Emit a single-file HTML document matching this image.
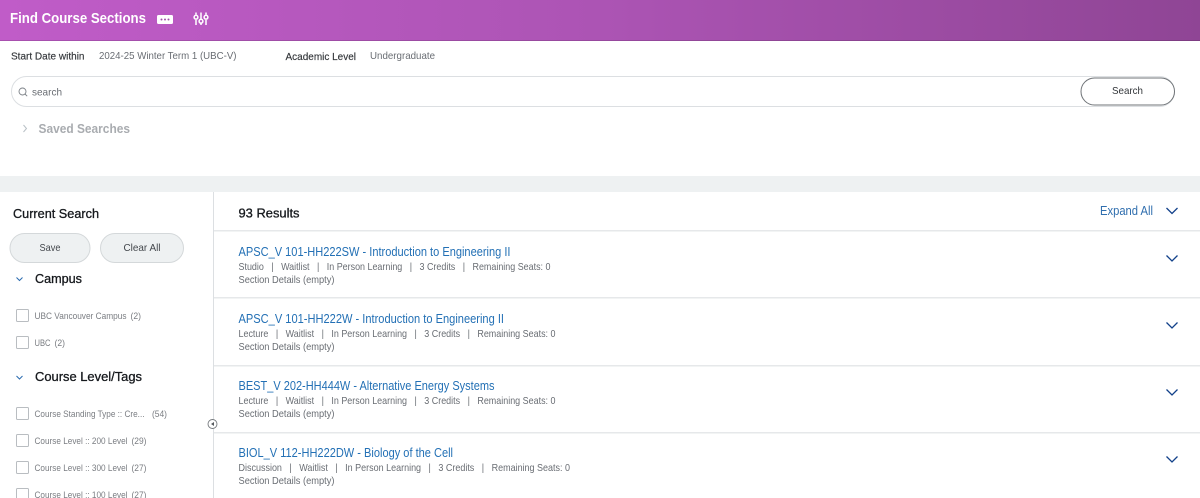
<!DOCTYPE html>
<html><head><meta charset="utf-8"><style>
html,body{margin:0;padding:0;background:#fff;width:1200px;height:498px;overflow:hidden}
svg{display:block;filter:blur(.3px)}
text{font-family:"Liberation Sans",sans-serif}
.g{fill:#696d73;font-size:10.3px}
.l{fill:#2370b5;font-size:13px}
.c{fill:#7a7d82;font-size:9.5px}
.m{fill:#15181c;stroke:#15181c;stroke-width:.3px}
</style></head><body>
<svg width="1200" height="498" viewBox="0 0 1200 498" xmlns="http://www.w3.org/2000/svg">
<defs><linearGradient id="g1" x1="0" x2="1" y1="0" y2="0"><stop offset="0" stop-color="#c05cc8"/><stop offset=".5" stop-color="#ac54b4"/><stop offset="1" stop-color="#8f4595"/></linearGradient></defs>
<rect width="1200" height="41" fill="url(#g1)"/>
<rect y="40" width="1200" height="1" fill="#000" opacity=".12"/>
<text x="10" y="23" fill="#fff" font-size="15" font-weight="bold" textLength="136" lengthAdjust="spacingAndGlyphs">Find Course Sections</text>
<rect x="157" y="15" width="16" height="9" rx="1.500" fill="#fff"/>
<circle cx="161.500" cy="19.500" r="1" fill="#a14ea8"/><circle cx="165" cy="19.500" r="1" fill="#a14ea8"/><circle cx="168.500" cy="19.500" r="1" fill="#a14ea8"/>
<g stroke="#fff" stroke-width="1.500" fill="none"><path d="M196 12.500v2M196 20v5M201 12.500v7M201 23.500v1.500M206 12.500v2M206 20v5"/><circle cx="196" cy="17.200" r="1.900"/><circle cx="201" cy="21.200" r="1.900"/><circle cx="206" cy="17.200" r="1.900"/></g>

<text x="11" y="59.500" fill="#33363a" font-size="10.500" textLength="73.500" lengthAdjust="spacingAndGlyphs" stroke="#33363a" stroke-width=".15">Start Date within</text>
<text x="99" y="59" class="g" textLength="137.500" lengthAdjust="spacingAndGlyphs" style="font-size:10.500px">2024-25 Winter Term 1 (UBC-V)</text>
<text x="285.500" y="60" fill="#33363a" font-size="10.500" textLength="70.500" lengthAdjust="spacingAndGlyphs" stroke="#33363a" stroke-width=".15">Academic Level</text>
<text x="370" y="59" class="g" textLength="65" lengthAdjust="spacingAndGlyphs" style="font-size:10.500px">Undergraduate</text>

<rect x="11.500" y="76.500" width="1163" height="30" rx="15" fill="#fff" stroke="#dcdfe2"/>
<circle cx="22.500" cy="91.500" r="3.500" fill="none" stroke="#7c8187" stroke-width=".9"/><path d="M25 94l2.200 2.200" stroke="#7c8187" stroke-width=".9"/>
<text x="32" y="95.500" class="g" textLength="30" lengthAdjust="spacingAndGlyphs">search</text>
<rect x="1081" y="78" width="93.500" height="27" rx="13.500" fill="#fff" stroke="#6f7377" stroke-width="1"/>
<text x="1112" y="94" fill="#33363a" font-size="10.500" textLength="31" lengthAdjust="spacingAndGlyphs">Search</text>

<path d="M23.500 125l3 3.500-3 3.500" fill="none" stroke="#b8c0c6" stroke-width="1"/>
<text x="38.500" y="133" fill="#a9acb0" font-size="12.800" font-weight="bold" textLength="91.500" lengthAdjust="spacingAndGlyphs">Saved Searches</text>

<rect y="176" width="1200" height="16" fill="#eef1f2"/>
<rect x="213" y="192" width="1" height="306" fill="#dcdfe2"/>

<text x="13" y="218" class="m" font-size="12.800" textLength="86" lengthAdjust="spacingAndGlyphs">Current Search</text>
<rect x="10" y="233.500" width="80" height="29" rx="14.500" fill="#eef1f2" stroke="#d4d8da"/>
<text x="39.500" y="251" fill="#43474c" font-size="10.500" textLength="21" lengthAdjust="spacingAndGlyphs">Save</text>
<rect x="100.500" y="233.500" width="83" height="29" rx="14.500" fill="#eef1f2" stroke="#d4d8da"/>
<text x="123.500" y="251" fill="#43474c" font-size="10.500" textLength="37" lengthAdjust="spacingAndGlyphs">Clear All</text>

<path d="M16.500 277.500l3 3 3-3" fill="none" stroke="#2a6bb0" stroke-width="1"/>
<text x="35" y="283" class="m" font-size="13" textLength="47" lengthAdjust="spacingAndGlyphs">Campus</text>
<rect x="16.500" y="309.500" width="12" height="12" rx="1" fill="#fff" stroke="#b9bdc1"/>
<text x="34.500" y="319" class="c" textLength="92" lengthAdjust="spacingAndGlyphs">UBC Vancouver Campus</text>
<text x="130.500" y="319" class="c" textLength="10.500" lengthAdjust="spacingAndGlyphs">(2)</text>
<rect x="16.500" y="336.500" width="12" height="12" rx="1" fill="#fff" stroke="#b9bdc1"/>
<text x="34.500" y="346" class="c" textLength="16" lengthAdjust="spacingAndGlyphs">UBC</text>
<text x="54.500" y="346" class="c" textLength="10.500" lengthAdjust="spacingAndGlyphs">(2)</text>

<path d="M16.500 376l3 3 3-3" fill="none" stroke="#2a6bb0" stroke-width="1"/>
<text x="35" y="381" class="m" font-size="13" textLength="107" lengthAdjust="spacingAndGlyphs">Course Level/Tags</text>
<rect x="16.500" y="407.500" width="12" height="12" rx="1" fill="#fff" stroke="#b9bdc1"/>
<text x="34.500" y="417" class="c" textLength="110" lengthAdjust="spacingAndGlyphs">Course Standing Type :: Cre...</text>
<text x="152" y="417" class="c" textLength="15" lengthAdjust="spacingAndGlyphs">(54)</text>
<rect x="16.500" y="434.500" width="12" height="12" rx="1" fill="#fff" stroke="#b9bdc1"/>
<text x="34.500" y="444" class="c" textLength="93" lengthAdjust="spacingAndGlyphs">Course Level :: 200 Level</text>
<text x="131.500" y="444" class="c" textLength="15" lengthAdjust="spacingAndGlyphs">(29)</text>
<rect x="16.500" y="461.500" width="12" height="12" rx="1" fill="#fff" stroke="#b9bdc1"/>
<text x="34.500" y="471" class="c" textLength="93" lengthAdjust="spacingAndGlyphs">Course Level :: 300 Level</text>
<text x="131.500" y="471" class="c" textLength="15" lengthAdjust="spacingAndGlyphs">(27)</text>
<rect x="16.500" y="488.500" width="12" height="12" rx="1" fill="#fff" stroke="#b9bdc1"/>
<text x="34.500" y="498" class="c" textLength="93" lengthAdjust="spacingAndGlyphs">Course Level :: 100 Level</text>
<text x="131.500" y="498" class="c" textLength="15" lengthAdjust="spacingAndGlyphs">(27)</text>

<circle cx="212.500" cy="424" r="4.500" fill="#fff" stroke="#75797d" stroke-width=".9"/><path d="M214 422v4l-3-2z" fill="#55595d"/>

<text x="238.500" y="217.500" class="m" font-size="12.800" textLength="61" lengthAdjust="spacingAndGlyphs">93 Results</text>
<text x="1100" y="215" fill="#2f6eae" font-size="12.500" textLength="53" lengthAdjust="spacingAndGlyphs">Expand All</text>
<path d="M1166.500 208l5.500 5.500 5.500-5.500" fill="none" stroke="#12418a" stroke-width="1.300"/>

<rect x="214" y="230" width="986" height="1.500" fill="#e6e8ea"/>
<rect x="214" y="297" width="986" height="1.500" fill="#e6e8ea"/>
<rect x="214" y="365" width="986" height="1.500" fill="#e6e8ea"/>
<rect x="214" y="432" width="986" height="1.500" fill="#e6e8ea"/>

<text x="238.500" y="256" class="l" textLength="272" lengthAdjust="spacingAndGlyphs">APSC_V 101-HH222SW - Introduction to Engineering II</text>
<text x="238.500" y="270" class="g" textLength="312" lengthAdjust="spacingAndGlyphs" xml:space="preserve">Studio   |   Waitlist   |   In Person Learning   |   3 Credits   |   Remaining Seats: 0</text>
<text x="238.500" y="283" class="g" textLength="96" lengthAdjust="spacingAndGlyphs">Section Details (empty)</text>
<path d="M1166.500 255.500l5.500 5.500 5.500-5.500" fill="none" stroke="#12418a" stroke-width="1.300"/>

<text x="238.500" y="323" class="l" textLength="265.500" lengthAdjust="spacingAndGlyphs">APSC_V 101-HH222W - Introduction to Engineering II</text>
<text x="238.500" y="337" class="g" textLength="317" lengthAdjust="spacingAndGlyphs" xml:space="preserve">Lecture   |   Waitlist   |   In Person Learning   |   3 Credits   |   Remaining Seats: 0</text>
<text x="238.500" y="350" class="g" textLength="96" lengthAdjust="spacingAndGlyphs">Section Details (empty)</text>
<path d="M1166.500 322.500l5.500 5.500 5.500-5.500" fill="none" stroke="#12418a" stroke-width="1.300"/>

<text x="238.500" y="390" class="l" textLength="256" lengthAdjust="spacingAndGlyphs">BEST_V 202-HH444W - Alternative Energy Systems</text>
<text x="238.500" y="404" class="g" textLength="317" lengthAdjust="spacingAndGlyphs" xml:space="preserve">Lecture   |   Waitlist   |   In Person Learning   |   3 Credits   |   Remaining Seats: 0</text>
<text x="238.500" y="417" class="g" textLength="96" lengthAdjust="spacingAndGlyphs">Section Details (empty)</text>
<path d="M1166.500 389.500l5.500 5.500 5.500-5.500" fill="none" stroke="#12418a" stroke-width="1.300"/>

<text x="238.500" y="457" class="l" textLength="214.500" lengthAdjust="spacingAndGlyphs">BIOL_V 112-HH222DW - Biology of the Cell</text>
<text x="238.500" y="471" class="g" textLength="331.500" lengthAdjust="spacingAndGlyphs" xml:space="preserve">Discussion   |   Waitlist   |   In Person Learning   |   3 Credits   |   Remaining Seats: 0</text>
<text x="238.500" y="484" class="g" textLength="96" lengthAdjust="spacingAndGlyphs">Section Details (empty)</text>
<path d="M1166.500 456.500l5.500 5.500 5.500-5.500" fill="none" stroke="#12418a" stroke-width="1.300"/>
</svg>
</body></html>
